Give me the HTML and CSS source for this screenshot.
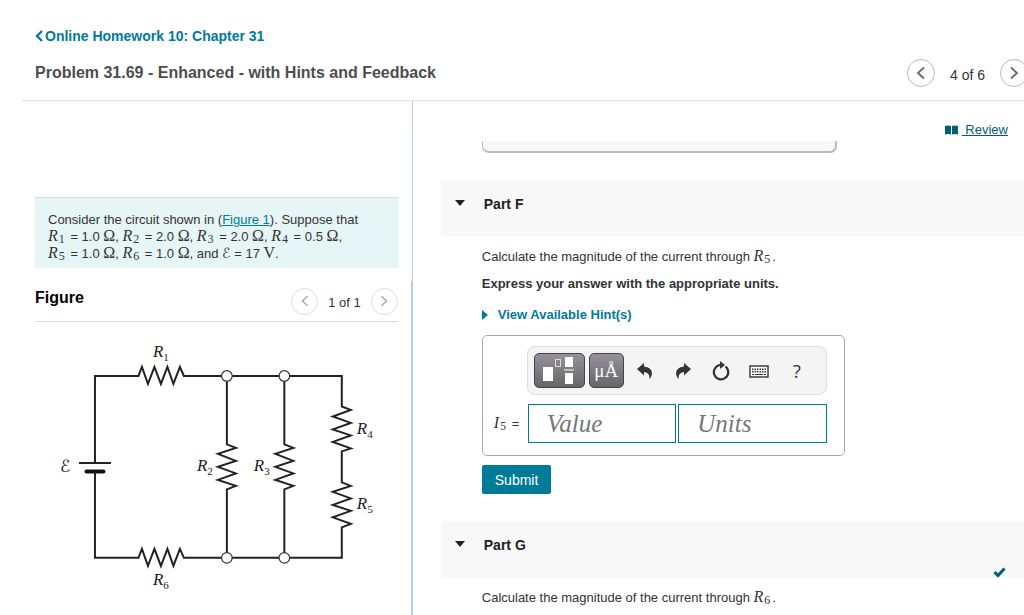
FILE: index.html
```html
<!DOCTYPE html>
<html lang="en">
<head>
    <meta charset="UTF-8">
    <meta name="viewport" content="width=device-width, initial-scale=1.0">
    <title>Online Homework 10: Chapter 31</title>
    <link rel="stylesheet" href="styles.css">
</head>
<body>
    <div class="page">
        <header class="page-header">
            <a class="back-link" href="#">
                <svg width="9" height="12" viewBox="0 0 9 12"><path d="M7 1 L2 6 L7 11" fill="none" stroke="currentColor" stroke-width="2.4"/></svg>
                <span>Online Homework 10: Chapter 31</span>
            </a>
            <div class="title-row">
                <h1>Problem 31.69 - Enhanced - with Hints and Feedback</h1>
                <nav class="pager">
                    <button type="button" class="round-btn" aria-label="Previous problem">
                        <svg width="14" height="14" viewBox="0 0 14 14"><path d="M10 1.5 L4 7 L10 12.5"/></svg>
                    </button>
                    <span>4 of 6</span>
                    <button type="button" class="round-btn" aria-label="Next problem">
                        <svg width="14" height="14" viewBox="0 0 14 14"><path d="M4 1.5 L10 7 L4 12.5"/></svg>
                    </button>
                </nav>
            </div>
        </header>

        <main class="columns">
            <section class="left">
                <div class="problem">
                    <p class="statement">
                        Consider the circuit shown in (<a href="#figure">Figure 1</a>). Suppose that<br>
                        <i>R</i><sub>1</sub> = 1.0 <b>Ω</b>, <i>R</i><sub>2</sub> = 2.0 <b>Ω</b>, <i>R</i><sub>3</sub> = 2.0 <b>Ω</b>, <i>R</i><sub>4</sub> = 0.5 <b>Ω</b>,<br>
                        <i>R</i><sub>5</sub> = 1.0 <b>Ω</b>, <i>R</i><sub>6</sub> = 1.0 <b>Ω</b>, and <i class="emf">ℰ</i> = 17 <b>V</b>.
                    </p>
                </div>

                <div class="figure" id="figure">
                    <div class="figure-header">
                        <h2>Figure</h2>
                        <nav class="pager figure-pager">
                            <button type="button" class="round-btn" aria-label="Previous figure">
                                <svg width="12" height="12" viewBox="0 0 14 14"><path d="M10 1.5 L4 7 L10 12.5"/></svg>
                            </button>
                            <span>1 of 1</span>
                            <button type="button" class="round-btn" aria-label="Next figure">
                                <svg width="12" height="12" viewBox="0 0 14 14"><path d="M4 1.5 L10 7 L4 12.5"/></svg>
                            </button>
                        </nav>
                    </div>

                    <svg class="circuit" viewBox="35 322 363 278">
                        <!-- outer loop -->
                        <path class="wire" d="M95 463 V376 H138.5 L142 367 L148 384 L154.5 367 L161 384 L167.5 367 L173.5 384 L180 367 L184 376 H342 V406.5 L351 410 L333 416.5 L351 423 L333 429.5 L351 435.5 L333 442 L351 448.5 L342 451.5 V482.5 L351 486 L333 492 L351 498.5 L333 505 L351 511 L333 517.5 L351 524 L342 527.5 V558 H184 L180 549 L173.5 566 L167.5 549 L161 566 L154.5 549 L148 566 L142 549 L138.5 558 H95 V472"/>
                        <!-- R2 and R3 -->
                        <path class="wire" d="M227 376 V444.5 L236 448 L218 454 L236 461 L218 467 L236 473.5 L218 480 L236 486 L227 489.5 V558"/>
                        <path class="wire" d="M284.5 376 V444.5 L293.5 448 L275.5 454 L293.5 461 L275.5 467 L293.5 473.5 L275.5 480 L293.5 486 L284.5 489.5 V558"/>
                        <!-- battery -->
                        <path class="wire" d="M79 463 H111"/>
                        <path class="plate" d="M86.5 471.5 H103.5"/>
                        <circle class="node" cx="227" cy="376" r="5.3"/>
                        <circle class="node" cx="284.5" cy="376" r="5.3"/>
                        <circle class="node" cx="227" cy="558" r="5.3"/>
                        <circle class="node" cx="284.5" cy="558" r="5.3"/>
                        <text x="153" y="357">R<tspan class="sub" dy="4">1</tspan></text>
                        <text x="153" y="585">R<tspan class="sub" dy="4">6</tspan></text>
                        <text x="197" y="471">R<tspan class="sub" dy="4">2</tspan></text>
                        <text x="254" y="471">R<tspan class="sub" dy="4">3</tspan></text>
                        <text x="357" y="434">R<tspan class="sub" dy="4">4</tspan></text>
                        <text x="357" y="509">R<tspan class="sub" dy="4">5</tspan></text>
                        <text x="60" y="472" class="script-e">ℰ</text>
                    </svg>
                </div>
            </section>

            <section class="right">
                <div class="review">
                    <a href="#">
                        <svg width="13" height="10" viewBox="0 0 13 10"><path d="M0 1 Q3 0 6 1 V9.5 Q3 8.5 0 9.5 Z M7 1 Q10 0 13 1 V9.5 Q10 8.5 7 9.5 Z" fill="currentColor"/></svg>
                        <span>&nbsp;Review</span>
                    </a>
                </div>
                <div class="previous-box"></div>

                <article class="part">
                    <header class="part-header">
                        <span class="arrow-down"></span>
                        <h2>Part F</h2>
                    </header>
                    <div class="part-body">
                        <p>Calculate the magnitude of the current through <i>R</i><sub>5</sub>.</p>
                        <p class="instruction">Express your answer with the appropriate units.</p>
                        <a class="hints" href="#"><span class="arrow-right"></span>View Available Hint(s)</a>

                        <form>
                            <div class="answer">
                                <div class="toolbar">
                                    <button type="button" class="dark-btn templates" aria-label="Templates">
                                        <svg width="32" height="28" viewBox="0 0 32 28">
                                            <path d="M1 10 h10 v14 h-10 z M23 0 h8 v10 h-8 z M23 16 h8 v11 h-8 z M22 12.5 h10 v1 h-10 z" fill="#fff"/>
                                            <rect x="13.5" y="2.5" width="5" height="7" fill="none" stroke="#ddd"/>
                                        </svg>
                                    </button>
                                    <button type="button" class="dark-btn symbols" aria-label="Symbols">μÅ</button>
                                    <button type="button" class="tool" aria-label="Undo">
                                        <svg width="16" height="16" viewBox="0 0 16 16"><path d="M0 6 L7 0 V3.5 Q15 4 15 11 Q14.5 14 12.5 16 Q13 9.5 7 9 V12.5 Z"/></svg>
                                    </button>
                                    <button type="button" class="tool" aria-label="Redo">
                                        <svg width="16" height="16" viewBox="0 0 16 16"><path d="M16 6 L9 0 V3.5 Q1 4 1 11 Q1.5 14 3.5 16 Q3 9.5 9 9 V12.5 Z"/></svg>
                                    </button>
                                    <button type="button" class="tool" aria-label="Reset">
                                        <svg width="18" height="20" viewBox="0 0 18 20"><path d="M13.5 5.5 A7.2 7.2 0 1 1 8.5 4" fill="none" stroke="#333" stroke-width="2.2"/><path d="M8 0 L13 4 L8 8 Z"/></svg>
                                    </button>
                                    <button type="button" class="tool" aria-label="Keyboard">
                                        <svg width="20" height="16" viewBox="0 0 20 16"><rect x="1" y="3" width="18" height="11" fill="#fff" stroke="#333" stroke-width="1.4"/><path d="M3 6.2 H17 M3 8.7 H17" fill="none" stroke="#333" stroke-width="1.5" stroke-dasharray="1.5 1"/><path d="M3 11.5 H5 M6 11.5 H14 M15 11.5 H17" stroke="#333" stroke-width="1.2"/></svg>
                                    </button>
                                    <button type="button" class="tool help" aria-label="Help">?</button>
                                </div>
                                <div class="fields">
                                    <label for="value"><i>I</i><sub>5</sub> =</label>
                                    <input type="text" id="value" placeholder="Value">
                                    <input type="text" id="units" placeholder="Units" aria-label="Units">
                                </div>
                            </div>
                            <button type="submit" class="submit">Submit</button>
                        </form>
                    </div>
                </article>

                <article class="part">
                    <header class="part-header">
                        <span class="arrow-down"></span>
                        <h2>Part G</h2>
                        <svg class="check" width="13" height="11" viewBox="0 0 13 11"><path d="M1.5 5 L5 8.5 L11.5 1.5" fill="none" stroke="#045e71" stroke-width="3"/></svg>
                    </header>
                    <div class="part-body">
                        <p>Calculate the magnitude of the current through <i>R</i><sub>6</sub>.</p>
                    </div>
                </article>
            </section>
        </main>
    </div>
</body>
</html>
```
FILE: styles.css
```css
* {
    margin: 0;
    padding: 0;
    box-sizing: border-box;
}

body {
    background: #fff;
    color: #333;
    font-family: "Liberation Sans", Arial, sans-serif;
    font-size: 13px;
    line-height: 16px;
}

a {
    color: #007a99;
}

button {
    font-family: inherit;
    cursor: pointer;
}

.page {
    display: flex;
    flex-direction: column;
    height: 100vh;
    padding-left: 22px;
    overflow: hidden;
}

/* Header */
.page-header {
    padding: 28px 0 13px 13px;
    border-bottom: 1px solid #e0e0e0;
}

.back-link {
    display: flex;
    align-items: center;
    gap: 1px;
    font-size: 14px;
    font-weight: bold;
    text-decoration: none;
}

.title-row {
    display: flex;
    justify-content: space-between;
    align-items: center;
    margin-top: 15px;
}

.title-row h1 {
    color: #4d4d4d;
    font-size: 16px;
}

.pager {
    display: flex;
    align-items: center;
    gap: 15px;
    margin-right: -4px;
    font-size: 14px;
}

.pager span {
    padding-top: 3px;
}

.round-btn {
    display: flex;
    justify-content: center;
    align-items: center;
    width: 28px;
    height: 28px;
    background: #fff;
    border: 1px solid #bbb;
    border-radius: 50%;
}

.round-btn path {
    fill: none;
    stroke: #666;
    stroke-width: 1.8;
}

.columns {
    flex: 1;
    display: grid;
    grid-template-columns: 39fr 61fr;
    min-height: 0;
}

.left {
    display: flex;
    flex-direction: column;
    min-height: 0;
}

/* Problem statement */
.problem {
    padding: 96px 13px 13px;
    border-right: 1px solid #b9c6d3;
}

.statement {
    padding: 13px 13px 6px;
    background: #e6f6f6;
    border-top: 1px solid #d5e0e0;
    line-height: 17px;
    white-space: nowrap;
}

i,
b,
sub {
    font-family: "Liberation Serif", "Times New Roman", serif;
    font-size: 16px;
    font-weight: normal;
    line-height: 0;
}

sub {
    margin: 0 2px 0 1px;
    font-size: 12px;
    vertical-align: -2px;
}

.emf {
    font-family: "DejaVu Serif", "DejaVu Sans", serif;
    font-size: 14px;
    font-style: normal;
}

/* Figure */
.figure {
    flex: 1;
    min-height: 0;
    padding: 0 13px;
    border-right: 2px solid #b8cde0;
}

.figure-header {
    display: flex;
    justify-content: space-between;
    align-items: center;
    height: 41px;
    border-bottom: 1px solid #ddd;
}

.figure-header h2 {
    padding-bottom: 6px;
    color: #000;
    font-size: 16px;
}

.figure-pager {
    gap: 10px;
    margin: 0;
    font-size: 13px;
}

.figure-pager .round-btn {
    width: 27px;
    height: 27px;
    border-color: #ddd;
}

.figure-pager path {
    stroke: #aaa;
}

.circuit {
    display: block;
    width: 100%;
    font-family: "Liberation Serif", "Times New Roman", serif;
    font-size: 17px;
    font-style: italic;
    fill: #222;
}

.sub {
    font-size: 11px;
    font-style: normal;
}

.script-e {
    font-family: "DejaVu Serif", "DejaVu Sans", serif;
    font-size: 17px;
}

.wire {
    fill: none;
    stroke: #222;
    stroke-width: 2;
}

.plate {
    stroke: #111;
    stroke-width: 4;
    stroke-linecap: round;
}

.node {
    fill: #fff;
    stroke: #333;
    stroke-width: 1.2;
}

/* Right column */
.right {
    min-width: 0;
    padding-left: 28px;
    overflow: hidden;
}

.review {
    display: flex;
    justify-content: flex-end;
    height: 40px;
    padding: 20px 16px 0 0;
}

.review a {
    display: flex;
    align-items: center;
    gap: 4px;
    height: 18px;
    color: #045e71;
    text-decoration: none;
}

.review span {
    text-decoration: underline;
}

.previous-box {
    width: 355px;
    height: 12px;
    margin: 0 0 27px 41px;
    background: #f8f8f8;
    border: solid #bbb;
    border-width: 0 2px 2px 1px;
    border-radius: 0 0 7px 7px;
}

.part-header {
    display: flex;
    align-items: flex-start;
    height: 57px;
    padding: 16px 18px 0 14px;
    background: #f8f8f8;
}

.part-header h2 {
    margin-left: 19px;
    color: #222;
    font-size: 14px;
}

.arrow-down {
    margin-top: 4px;
    border: solid transparent;
    border-width: 6px 5px 0;
    border-top-color: #222;
}

.check {
    align-self: flex-end;
    margin-left: auto;
}

.part-body {
    padding: 12px 0 27px 41px;
}

.instruction {
    margin-top: 11px;
    font-weight: bold;
}

.hints {
    display: flex;
    align-items: center;
    margin: 15px 0 12px;
    font-weight: bold;
    text-decoration: none;
}

.arrow-right {
    margin-right: 10px;
    border: solid transparent;
    border-width: 5px 0 5px 6px;
    border-left-color: #007a99;
}

.answer {
    width: 363px;
    max-width: 100%;
    padding: 10px 17px 12px 11px;
    border: 1px solid #aaa;
    border-radius: 5px;
}

.toolbar {
    display: flex;
    align-items: center;
    gap: 4px;
    height: 49px;
    margin: 0 0 9px 33px;
    padding: 0 12px 0 6px;
    background: #f4f4f4;
    border: 1px solid #ddd;
    border-radius: 8px;
}

.dark-btn {
    display: flex;
    justify-content: center;
    align-items: center;
    height: 35px;
    background: linear-gradient(#95929c, #666);
    border: 1px solid #444;
    border-radius: 5px;
    color: #fff;
}

.templates {
    justify-content: flex-start;
    width: 51px;
    padding-left: 7px;
}

.symbols {
    width: 35px;
    font-family: "Liberation Serif", serif;
    font-size: 19px;
}

.tool {
    flex: 1;
    display: flex;
    justify-content: center;
    align-items: center;
    height: 35px;
    background: none;
    border: none;
    color: #333;
    fill: #333;
}

.help {
    font-family: "Open Sans", sans-serif;
    font-size: 18px;
}

.fields {
    display: flex;
    align-items: center;
    gap: 2px;
}

.fields label {
    width: 32px;
    white-space: nowrap;
}

.fields input {
    flex: 1;
    min-width: 0;
    height: 39px;
    padding: 0 18px;
    border: 1px solid #007a99;
    font-family: "Liberation Serif", serif;
    font-size: 25px;
}

.fields input::placeholder {
    color: #777;
    font-style: italic;
}

.submit {
    height: 29px;
    margin-top: 9px;
    padding: 0 13px;
    background: #007a99;
    border: none;
    border-radius: 2px;
    color: #fff;
    font-size: 14px;
}
```
